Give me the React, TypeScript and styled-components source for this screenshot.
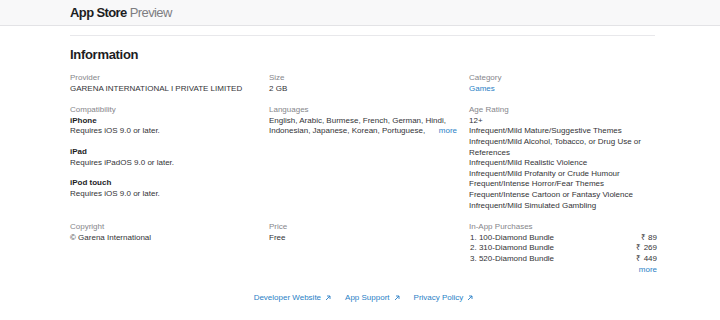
import { FC } from 'react';
import styled, { createGlobalStyle } from 'styled-components';

const GlobalStyle = createGlobalStyle`
  html, body {
    margin: 0;
    padding: 0;
    background: #fff;
    font-family: "Liberation Sans", Arial, sans-serif;
    -webkit-font-smoothing: antialiased;
  }
`;

const Header = styled.header`
  height: 25px;
  background: #f8f8f9;
  border-bottom: 1px solid #e3e3e6;
  display: flex;
  align-items: center;
`;

const HeaderInner = styled.div`
  margin-left: 70px;
  font-size: 13px;
  letter-spacing: -0.6px;
  color: #1d1d1f;
`;

const Brand = styled.span`
  font-weight: 700;
`;

const Sub = styled.span`
  color: #7d7d82;
  margin-left: 3px;
`;

const Main = styled.main`
  width: 587px;
  margin-left: 70px;
  padding-top: 9px;
`;

const Divider = styled.hr`
  border: 0;
  border-top: 1px solid #e8e8eb;
  margin: 0 2px 0 0;
`;

const Title = styled.h2`
  margin: 11px 0 0;
  font-size: 13px;
  line-height: 16px;
  font-weight: 700;
  letter-spacing: -0.3px;
  color: #1d1d1f;
`;

const Grid = styled.div`
  margin-top: 10px;
  display: grid;
  grid-template-columns: 199px 200px 1fr;
  row-gap: 11px;
  align-items: start;
`;

const Field = styled.div`
  font-size: 8px;
  line-height: 10.6px;
  color: #333336;
`;

const Label = styled.div`
  color: #86868b;
`;

const Strong = styled.div`
  font-weight: 700;
  color: #1d1d1f;
`;

const Device = styled.div`
  & + & {
    margin-top: 10px;
  }
`;

const Link = styled.a`
  color: #2a7fc6;
  text-decoration: none;
`;

const MoreRow = styled.div`
  display: flex;
  align-items: flex-end;
  justify-content: space-between;
  width: 188px;
`;

const Purchase = styled.div`
  display: flex;
  justify-content: space-between;
`;

const PurchaseName = styled.span`
  padding-left: 1px;
`;

const RightMore = styled.div`
  text-align: right;
`;

const Footer = styled.footer`
  margin-top: 18px;
  display: flex;
  justify-content: center;
  gap: 14px;
  font-size: 8px;
  line-height: 10px;
`;

const ExtLink = styled(Link)`
  display: inline-flex;
  align-items: center;
  gap: 4px;
`;

const Arrow: FC = () => (
  <svg width="6" height="6" viewBox="0 0 6 6" fill="none" stroke="#2a7fc6" strokeWidth="0.9">
    <path d="M1 5 L5 1 M2 1 H5 V4" />
  </svg>
);

const AGE_NOTES = [
  'Infrequent/Mild Mature/Suggestive Themes',
  'Infrequent/Mild Alcohol, Tobacco, or Drug Use or References',
  'Infrequent/Mild Realistic Violence',
  'Infrequent/Mild Profanity or Crude Humour',
  'Frequent/Intense Horror/Fear Themes',
  'Frequent/Intense Cartoon or Fantasy Violence',
  'Infrequent/Mild Simulated Gambling',
];

const PURCHASES = [
  { name: '1.  100-Diamond Bundle', price: '₹ 89' },
  { name: '2.  310-Diamond Bundle', price: '₹ 269' },
  { name: '3.  520-Diamond Bundle', price: '₹ 449' },
];

const DEVICES = [
  { name: 'iPhone', req: 'Requires iOS 9.0 or later.' },
  { name: 'iPad', req: 'Requires iPadOS 9.0 or later.' },
  { name: 'iPod touch', req: 'Requires iOS 9.0 or later.' },
];

export default function App() {
  return (
    <>
      <GlobalStyle />
      <Header>
        <HeaderInner>
          <Brand>App Store</Brand>
          <Sub>Preview</Sub>
        </HeaderInner>
      </Header>
      <Main>
        <Divider />
        <Title>Information</Title>
        <Grid>
          <Field>
            <Label>Provider</Label>
            GARENA INTERNATIONAL I PRIVATE LIMITED
          </Field>
          <Field>
            <Label>Size</Label>
            2 GB
          </Field>
          <Field>
            <Label>Category</Label>
            <Link>Games</Link>
          </Field>

          <Field>
            <Label>Compatibility</Label>
            {DEVICES.map((d) => (
              <Device key={d.name}>
                <Strong>{d.name}</Strong>
                {d.req}
              </Device>
            ))}
          </Field>
          <Field>
            <Label>Languages</Label>
            English, Arabic, Burmese, French, German, Hindi,
            <MoreRow>
              <span>Indonesian, Japanese, Korean, Portuguese,</span>
              <Link>more</Link>
            </MoreRow>
          </Field>
          <Field>
            <Label>Age Rating</Label>
            12+
            {AGE_NOTES.map((n) => (
              <div key={n}>{n}</div>
            ))}
          </Field>

          <Field>
            <Label>Copyright</Label>
            © Garena International
          </Field>
          <Field>
            <Label>Price</Label>
            Free
          </Field>
          <Field>
            <Label>In-App Purchases</Label>
            {PURCHASES.map((p) => (
              <Purchase key={p.name}>
                <PurchaseName>{p.name}</PurchaseName>
                <span>{p.price}</span>
              </Purchase>
            ))}
            <RightMore>
              <Link>more</Link>
            </RightMore>
          </Field>
        </Grid>
        <Footer>
          <ExtLink>Developer Website <Arrow /></ExtLink>
          <ExtLink>App Support <Arrow /></ExtLink>
          <ExtLink>Privacy Policy <Arrow /></ExtLink>
        </Footer>
      </Main>
    </>
  );
}
